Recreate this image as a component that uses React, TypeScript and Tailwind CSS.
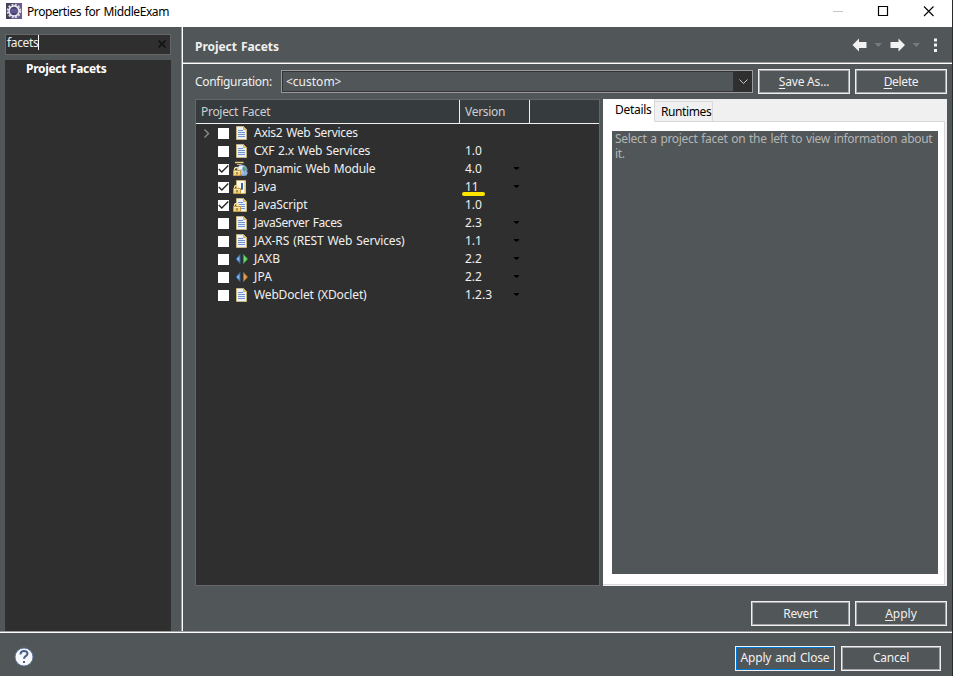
import type { ReactNode } from 'react';

type Facet = {
  name: string;
  version?: string;
  checked?: boolean;
  expandable?: boolean;
  menu?: boolean;
  icon: 'doc' | 'web' | 'java' | 'lockedDoc' | 'jaxb' | 'jpa';
  spacing?: string;
};

const FACETS: Facet[] = [
  { name: 'Axis2 Web Services', icon: 'doc', expandable: true },
  { name: 'CXF 2.x Web Services', version: '1.0', icon: 'doc', spacing: 'tracking-[-0.22px]' },
  { name: 'Dynamic Web Module', version: '4.0', icon: 'web', checked: true, menu: true, spacing: 'tracking-[-0.22px]' },
  { name: 'Java', version: '11', icon: 'java', checked: true, menu: true, spacing: 'tracking-[-0.1px]' },
  { name: 'JavaScript', version: '1.0', icon: 'lockedDoc', checked: true, spacing: 'tracking-[-0.15px]' },
  { name: 'JavaServer Faces', version: '2.3', icon: 'doc', menu: true, spacing: 'tracking-[-0.4px]' },
  { name: 'JAX-RS (REST Web Services)', version: '1.1', icon: 'doc', menu: true, spacing: 'tracking-[-0.12px]' },
  { name: 'JAXB', version: '2.2', icon: 'jaxb', menu: true, spacing: 'tracking-[0.05px]' },
  { name: 'JPA', version: '2.2', icon: 'jpa', menu: true, spacing: 'tracking-[0.2px]' },
  { name: 'WebDoclet (XDoclet)', version: '1.2.3', icon: 'doc', menu: true, spacing: 'tracking-[-0.15px]' },
];

function DocShape() {
  return (
    <g>
      <path d="M4.500 1.500h7l3 3v10h-10z" fill="#e8f0fb" stroke="#c9b57e" />
      <path d="M11.500 1.500v3h3z" fill="#efd48a" stroke="#d2b15e" />
      <path d="M6 5.500h5M6 7.500h7M6 9.500h7M6 11.500h7" stroke="#7394cc" />
    </g>
  );
}

function Lock() {
  return (
    <g>
      <path d="M2.500 10V8.500a2 2 0 0 1 4 0V10" fill="none" stroke="#f5e3a8" strokeWidth="1.300" />
      <path d="M1.500 9.500h7v5h-7z" fill="#f2d583" stroke="#c89b44" />
      <path d="M2 10.500h6" stroke="#fbeab5" />
      <path d="M4.500 11h1v2.500h-1z" fill="#6b4a12" />
    </g>
  );
}

function FacetIcon({ kind }: { kind: Facet['icon'] }) {
  return (
    <svg width="16" height="16" viewBox="0 0 16 16" className="shrink-0">
      {kind === 'doc' && <DocShape />}
      {kind === 'lockedDoc' && (
        <>
          <DocShape />
          <Lock />
        </>
      )}
      {kind === 'web' && (
        <>
          <path d="M3 1.500h8.500" stroke="#e9cd84" strokeWidth="1.500" />
          <path d="M5 3.500h4.500" stroke="#d6ad52" />
          <circle cx="10" cy="9" r="5" fill="#aac6e8" stroke="#6d90c0" />
          <path d="M6 7q2-3.500 5-2l-1 3-3 1z" fill="#e6effa" />
          <path d="M11 5.500l2.500 1 .5 2.500-1.500 2-2-2z" fill="#5b9c7c" />
          <path d="M9 14l3.500-3.500 3.500 1-1.500 3-4 .5z" fill="#8fb0e0" />
          <Lock />
        </>
      )}
      {kind === 'java' && (
        <>
          <path d="M4.500 1.500h9v13h-9z" fill="#fdfcf5" stroke="#cdae68" />
          <path d="M12 2h1.500v12H12z" fill="#eedca5" />
          <path d="M9 4h2v6.500L9 11z" fill="#2f66a8" />
          <Lock />
        </>
      )}
      {(kind === 'jaxb' || kind === 'jpa') && (
        <>
          <path d="M8 3.500v9L4 8z" fill="#7fb2e2" stroke="#2a6199" />
          <path
            d="M11.500 3.500v9L15.500 8z"
            fill={kind === 'jaxb' ? '#6fdc72' : '#e0a257'}
            stroke={kind === 'jaxb' ? '#2d9c40' : '#a8681f'}
          />
        </>
      )}
    </svg>
  );
}

function Checkbox({ checked }: { checked?: boolean }) {
  return (
    <svg width="11" height="11" viewBox="0 0 11 11" className="shrink-0 bg-white">
      {checked && <path d="M.8 5l3 3L10.300 1.500" fill="none" stroke="#222" strokeWidth="1.300" />}
    </svg>
  );
}

function Button({ children, className, primary }: { children: ReactNode; className: string; primary?: boolean }) {
  return (
    <button className={`h-[25px] shrink-0 border border-[#f0f0f0] ${className}`}>
      <span
        className={`flex h-full items-center justify-center border whitespace-nowrap ${
          primary ? 'border-[#0078d7]' : 'border-[#a3a5a6]'
        }`}
      >
        <span>{children}</span>
      </span>
    </button>
  );
}

function TitleBar() {
  return (
    <header className="flex h-[27px] shrink-0 items-start bg-white text-black">
      <svg width="16" height="16" viewBox="0 0 16 16" className="mt-[3px] ml-1.5">
        <path d="M0 0h16v16H0z" fill="#6a5a98" />
        <path d="M0 0h9L5 16H0z" fill="#45425c" />
        <circle cx="8" cy="8" r="6.300" fill="none" stroke="#ddd" strokeWidth="2" strokeDasharray="2 1.300" />
        <circle cx="8" cy="8" r="5" fill="#4a4178" stroke="#eee" strokeWidth="1.500" />
        <path d="M4 7h8M4 9h8" stroke="#7b70a5" />
      </svg>
      <span className="ml-[5px] leading-[23px] tracking-[-0.42px] [word-spacing:1px]">Properties for MiddleExam</span>
      <svg width="101" height="12" viewBox="0 0 101 12" className="mt-[5px] mr-[18px] ml-auto" fill="none">
        <path d="M0 6.500h10" stroke="#c6c6c6" />
        <path d="M45.500 1.500h9v9h-9z" stroke="#000" strokeWidth="1.200" />
        <path d="M91 1.500l9.500 9.500M100.500 1.500L91 11" stroke="#000" strokeWidth="1.100" />
      </svg>
    </header>
  );
}

function Sidebar() {
  return (
    <aside className="flex w-[183px] shrink-0 flex-col border-r border-white">
      <div className="flex flex-1 flex-col border-r border-[#9b9b9b] pt-[7px] pr-[10px] pl-[5px]">
        <div className="flex h-[21px] shrink-0 items-center border border-[#666] bg-[#2f2f2f] pr-1 pl-px">
          <span className="-mt-1 leading-4 tracking-[-0.35px]">facets</span>
          <span className="-mt-1 h-[15px] w-px bg-white" />
          <svg width="8" height="8" viewBox="0 0 8 8" className="-mt-px ml-auto">
            <path d="M.5.5l7 7M7.500.5l-7 7" stroke="#151515" strokeWidth="1.800" />
          </svg>
        </div>
        <div className="mt-[5px] flex-1 bg-[#2f2f2f] pl-[21px] leading-[18px] font-bold tracking-[-0.3px] text-white [word-spacing:1px]">
          Project Facets
        </div>
      </div>
    </aside>
  );
}

function NavIcons() {
  return (
    <svg width="90" height="16" viewBox="0 0 90 16">
      <path d="M.5 8L7 1.500V5h7.500v6H7v3.500z" fill="#f2f2f2" />
      <path d="M22.500 6h7.500l-3.750 4z" fill="#777b7d" />
      <path d="M53 8l-6.500-6.500V5H38.500v6h8v3.500z" fill="#f2f2f2" />
      <path d="M60.500 6H68l-3.750 4z" fill="#777b7d" />
      <path d="M82 1.500h3v3h-3zM82 6.500h3v3h-3zM82 12h3v3h-3z" fill="#f2f2f2" />
    </svg>
  );
}

function FacetTable() {
  return (
    <section className="flex w-[405px] shrink-0 flex-col border border-[#666] bg-[#2f2f2f]">
      <div className="flex h-6 shrink-0 border-b border-[#f0f0f0] bg-[#363b3e] leading-[23px] text-[#cfcfcf]">
        <span className="w-[264px] border-r border-[#f0f0f0] pl-[5px] tracking-[-0.3px] [word-spacing:1px]">Project Facet</span>
        <span className="w-[70px] border-r border-[#f0f0f0] pl-[5px] tracking-[-0.3px]">Version</span>
      </div>
      {FACETS.map((facet) => (
        <div key={facet.name} className="flex h-[18px] shrink-0 items-center">
          <svg width="22" height="10" viewBox="0 0 22 10" className="shrink-0">
            {facet.expandable && <path d="M8.500 1.500l4 4-4 4" fill="none" stroke="#858585" strokeWidth="1.500" />}
          </svg>
          <Checkbox checked={facet.checked} />
          <span className="ml-[3px] flex w-[22px]">
            <FacetIcon kind={facet.icon} />
          </span>
          <span className={`w-[211px] whitespace-nowrap [word-spacing:1px] ${facet.spacing ?? 'tracking-[-0.28px]'}`}>
            {facet.name}
          </span>
          <span className="relative w-[49px]">
            {facet.version}
            {facet.version === '11' && (
              <span className="absolute top-[14px] -left-[3px] h-1 w-[23px] rounded-full bg-[#ffe500]" />
            )}
          </span>
          {facet.menu && (
            <svg width="5" height="3" viewBox="0 0 5 3" className="-mt-px">
              <path d="M0 0h5v1L2.500 3 0 1z" fill="#000" />
            </svg>
          )}
        </div>
      ))}
    </section>
  );
}

function DetailsPane() {
  return (
    <section className="ml-[3px] flex w-[344px] flex-col bg-[#f0f0f0] text-black">
      <div className="flex h-[23px] shrink-0 items-end">
        <div className="h-[23px] w-[52px] border-r border-[#d9d9d9] bg-white pl-3 leading-[21px] tracking-[-0.3px]">Details</div>
        <div className="h-[21px] w-[58px] border border-l-0 border-[#d9d9d9] pl-1.5 leading-5 tracking-[-0.4px]">Runtimes</div>
        <div className="mr-0.5 flex-1 self-end border-b border-[#d9d9d9]" />
      </div>
      <div className="mr-0.5 mb-px flex flex-1 border-r border-b border-[#d9d9d9] bg-white pt-[9px] pr-1.5 pb-[10px] pl-[9px]">
        <p className="flex-1 bg-[#515658] pl-[3px] leading-[15px] tracking-[-0.32px] whitespace-nowrap text-[#b4b5b5] [word-spacing:1px]">
          Select a project facet on the left to view information about
          <br />
          it.
        </p>
      </div>
    </section>
  );
}

export default function App() {
  return (
    <div className="flex h-[676px] w-[953px] flex-col overflow-hidden border-r border-[#292929] bg-[#515658] font-['Noto_Sans',sans-serif] text-[12px] text-[#f0f0f0]">
      <TitleBar />
      <div className="flex min-h-0 flex-1">
        <Sidebar />
        <main className="flex min-w-0 flex-1 flex-col">
          <div className="flex h-[37px] shrink-0 flex-col border-b border-white">
            <div className="flex flex-1 items-center border-b border-[#9b9b9b] pl-3">
              <h1 className="mt-1 mr-auto font-bold tracking-[-0.05px] [word-spacing:1px]">Project Facets</h1>
              <span className="mr-[10px]">
                <NavIcons />
              </span>
            </div>
          </div>

          <div className="mt-[5px] flex h-[25px] shrink-0 items-center pl-3">
            <span className="w-[86px] tracking-[-0.3px]">Configuration:</span>
            <div className="flex h-[23px] w-[472px] border border-[#999b9c]">
              <span className="flex-1 border border-[#343434] pl-[3px] leading-[20px]">&lt;custom&gt;</span>
              <span className="flex w-[18px] items-center justify-center bg-[#2f2f2f]">
                <svg width="9" height="6" viewBox="0 0 9 6">
                  <path d="M.5.5l4 4 4-4" fill="none" stroke="#c8c8c8" />
                </svg>
              </span>
            </div>
            <Button className="ml-[5px] w-[92px] tracking-[-0.2px]">
              <u className="underline-offset-2">S</u>ave As...
            </Button>
            <Button className="ml-[5px] w-[92px] tracking-[-0.3px]">
              <u className="underline-offset-2">D</u>elete
            </Button>
          </div>

          <div className="mt-[5px] flex h-[487px] shrink-0 pl-3">
            <FacetTable />
            <DetailsPane />
          </div>

          <div className="mt-[15px] flex justify-end gap-[5px] pr-[5px]">
            <Button className="w-[99px] tracking-[-0.3px]">Revert</Button>
            <Button className="w-[92px]">
              <u className="underline-offset-2">A</u>pply
            </Button>
          </div>
        </main>
      </div>

      <footer className="flex h-[45px] shrink-0 flex-col border-t border-[#9b9b9b]">
        <div className="flex flex-1 items-center border-t border-white pr-[11px] pl-[14px]">
          <svg width="20" height="20" viewBox="0 0 20 20" className="mt-1 mr-auto">
            <circle cx="10" cy="10" r="9" fill="#f6f7fa" stroke="#60779f" />
            <path d="M6.500 7.500q0-3.500 3.500-3.500t3.500 2.800c0 2-3.500 2.200-3.500 5" fill="none" stroke="#485f8c" strokeWidth="2" />
            <path d="M9 14h2v2H9z" fill="#485f8c" />
          </svg>
          <Button primary className="mt-[7px] w-[100px] tracking-[-0.2px] [word-spacing:1px]">
            Apply and Close
          </Button>
          <Button className="mt-[7px] ml-1.5 w-[100px] tracking-[-0.2px]">Cancel</Button>
        </div>
      </footer>
    </div>
  );
}
